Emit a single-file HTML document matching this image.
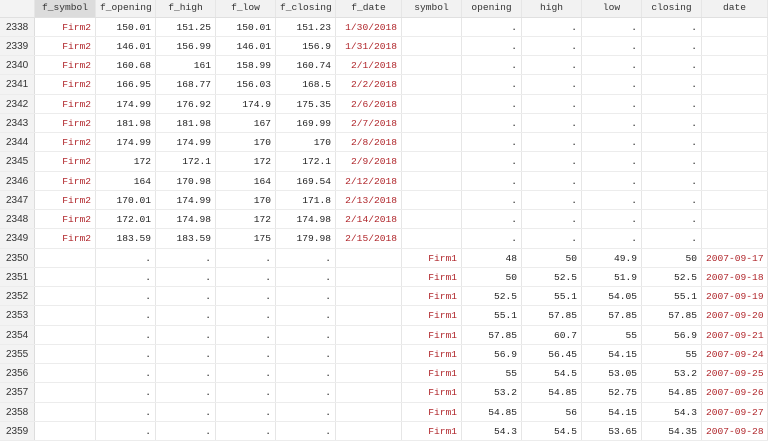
<!DOCTYPE html>
<html><head><meta charset="utf-8"><style>
body{margin:0;width:768px;height:436px;overflow:hidden;background:#fff;font-family:"Liberation Mono",monospace;font-size:9.6px;}
.row{display:flex;height:19.25px;box-sizing:border-box;border-bottom:1px solid #ececec;}
.row>div{box-sizing:border-box;padding:0 4px;border-right:1px solid #e6e6e6;white-space:nowrap;overflow:hidden;text-align:right;color:#222;line-height:19px;}
.h{height:17.5px;background:#f2f2f2;border-bottom:1px solid #e0e0e0;}
.h>div{text-align:center;color:#333;line-height:16px;}
.h>div.sel{background:#dcdcdc;}
.row>div.n{background:#f3f3f3;color:#333;font-family:"Liberation Sans",sans-serif;font-size:10px;text-align:left;padding-left:6px;border-right:1px solid #ddd;}
.row>div.r{color:#b0262b;}
.row>div:nth-child(1){width:35px}
.row>div:nth-child(2){width:61px}
.row>div:nth-child(3),.row>div:nth-child(4),.row>div:nth-child(5),.row>div:nth-child(6){width:60px}
.row>div:nth-child(7){width:66px}
.row>div:nth-child(8),.row>div:nth-child(9),.row>div:nth-child(10),.row>div:nth-child(11),.row>div:nth-child(12){width:60px}
.row>div:nth-child(13){width:66px}
</style></head><body>
<div class="row h"><div style="background:#f3f3f3"></div><div class="sel">f_symbol</div><div>f_opening</div><div>f_high</div><div>f_low</div><div>f_closing</div><div>f_date</div><div>symbol</div><div>opening</div><div>high</div><div>low</div><div>closing</div><div>date</div></div>
<div class="row"><div class="n">2338</div><div class="r">Firm2</div><div>150.01</div><div>151.25</div><div>150.01</div><div>151.23</div><div class="r">1/30/2018</div><div></div><div>.</div><div>.</div><div>.</div><div>.</div><div></div></div>
<div class="row"><div class="n">2339</div><div class="r">Firm2</div><div>146.01</div><div>156.99</div><div>146.01</div><div>156.9</div><div class="r">1/31/2018</div><div></div><div>.</div><div>.</div><div>.</div><div>.</div><div></div></div>
<div class="row"><div class="n">2340</div><div class="r">Firm2</div><div>160.68</div><div>161</div><div>158.99</div><div>160.74</div><div class="r">2/1/2018</div><div></div><div>.</div><div>.</div><div>.</div><div>.</div><div></div></div>
<div class="row"><div class="n">2341</div><div class="r">Firm2</div><div>166.95</div><div>168.77</div><div>156.03</div><div>168.5</div><div class="r">2/2/2018</div><div></div><div>.</div><div>.</div><div>.</div><div>.</div><div></div></div>
<div class="row"><div class="n">2342</div><div class="r">Firm2</div><div>174.99</div><div>176.92</div><div>174.9</div><div>175.35</div><div class="r">2/6/2018</div><div></div><div>.</div><div>.</div><div>.</div><div>.</div><div></div></div>
<div class="row"><div class="n">2343</div><div class="r">Firm2</div><div>181.98</div><div>181.98</div><div>167</div><div>169.99</div><div class="r">2/7/2018</div><div></div><div>.</div><div>.</div><div>.</div><div>.</div><div></div></div>
<div class="row"><div class="n">2344</div><div class="r">Firm2</div><div>174.99</div><div>174.99</div><div>170</div><div>170</div><div class="r">2/8/2018</div><div></div><div>.</div><div>.</div><div>.</div><div>.</div><div></div></div>
<div class="row"><div class="n">2345</div><div class="r">Firm2</div><div>172</div><div>172.1</div><div>172</div><div>172.1</div><div class="r">2/9/2018</div><div></div><div>.</div><div>.</div><div>.</div><div>.</div><div></div></div>
<div class="row"><div class="n">2346</div><div class="r">Firm2</div><div>164</div><div>170.98</div><div>164</div><div>169.54</div><div class="r">2/12/2018</div><div></div><div>.</div><div>.</div><div>.</div><div>.</div><div></div></div>
<div class="row"><div class="n">2347</div><div class="r">Firm2</div><div>170.01</div><div>174.99</div><div>170</div><div>171.8</div><div class="r">2/13/2018</div><div></div><div>.</div><div>.</div><div>.</div><div>.</div><div></div></div>
<div class="row"><div class="n">2348</div><div class="r">Firm2</div><div>172.01</div><div>174.98</div><div>172</div><div>174.98</div><div class="r">2/14/2018</div><div></div><div>.</div><div>.</div><div>.</div><div>.</div><div></div></div>
<div class="row"><div class="n">2349</div><div class="r">Firm2</div><div>183.59</div><div>183.59</div><div>175</div><div>179.98</div><div class="r">2/15/2018</div><div></div><div>.</div><div>.</div><div>.</div><div>.</div><div></div></div>
<div class="row"><div class="n">2350</div><div></div><div>.</div><div>.</div><div>.</div><div>.</div><div></div><div class="r">Firm1</div><div>48</div><div>50</div><div>49.9</div><div>50</div><div class="r">2007-09-17</div></div>
<div class="row"><div class="n">2351</div><div></div><div>.</div><div>.</div><div>.</div><div>.</div><div></div><div class="r">Firm1</div><div>50</div><div>52.5</div><div>51.9</div><div>52.5</div><div class="r">2007-09-18</div></div>
<div class="row"><div class="n">2352</div><div></div><div>.</div><div>.</div><div>.</div><div>.</div><div></div><div class="r">Firm1</div><div>52.5</div><div>55.1</div><div>54.05</div><div>55.1</div><div class="r">2007-09-19</div></div>
<div class="row"><div class="n">2353</div><div></div><div>.</div><div>.</div><div>.</div><div>.</div><div></div><div class="r">Firm1</div><div>55.1</div><div>57.85</div><div>57.85</div><div>57.85</div><div class="r">2007-09-20</div></div>
<div class="row"><div class="n">2354</div><div></div><div>.</div><div>.</div><div>.</div><div>.</div><div></div><div class="r">Firm1</div><div>57.85</div><div>60.7</div><div>55</div><div>56.9</div><div class="r">2007-09-21</div></div>
<div class="row"><div class="n">2355</div><div></div><div>.</div><div>.</div><div>.</div><div>.</div><div></div><div class="r">Firm1</div><div>56.9</div><div>56.45</div><div>54.15</div><div>55</div><div class="r">2007-09-24</div></div>
<div class="row"><div class="n">2356</div><div></div><div>.</div><div>.</div><div>.</div><div>.</div><div></div><div class="r">Firm1</div><div>55</div><div>54.5</div><div>53.05</div><div>53.2</div><div class="r">2007-09-25</div></div>
<div class="row"><div class="n">2357</div><div></div><div>.</div><div>.</div><div>.</div><div>.</div><div></div><div class="r">Firm1</div><div>53.2</div><div>54.85</div><div>52.75</div><div>54.85</div><div class="r">2007-09-26</div></div>
<div class="row"><div class="n">2358</div><div></div><div>.</div><div>.</div><div>.</div><div>.</div><div></div><div class="r">Firm1</div><div>54.85</div><div>56</div><div>54.15</div><div>54.3</div><div class="r">2007-09-27</div></div>
<div class="row"><div class="n">2359</div><div></div><div>.</div><div>.</div><div>.</div><div>.</div><div></div><div class="r">Firm1</div><div>54.3</div><div>54.5</div><div>53.65</div><div>54.35</div><div class="r">2007-09-28</div></div>
</body></html>
